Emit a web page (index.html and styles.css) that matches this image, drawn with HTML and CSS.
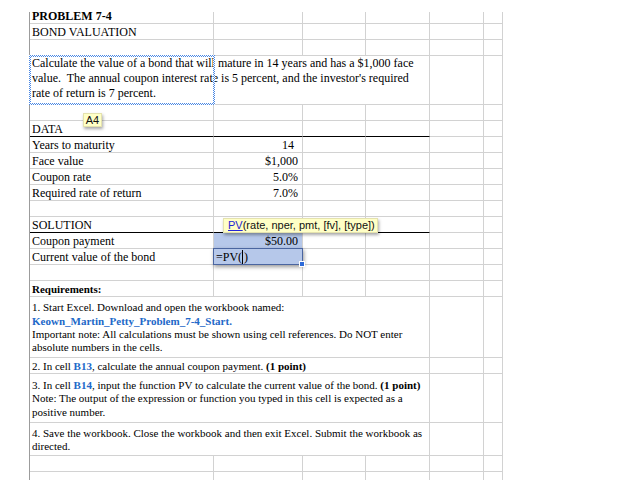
FILE: index.html
```html
<!DOCTYPE html>
<html>
<head>
<meta charset="utf-8">
<link rel="stylesheet" href="styles.css">
</head>
<body>
<div class="sheet">
  <!-- row 1 -->
  <div class="c bold">PROBLEM 7-4</div><div class="c"></div><div class="c"></div><div class="c"></div><div class="c"></div><div class="c"></div>
  <!-- row 2 -->
  <div class="c">BOND VALUATION</div><div class="c"></div><div class="c"></div><div class="c"></div><div class="c"></div><div class="c"></div>
  <!-- row 3 -->
  <div class="c"></div><div class="c"></div><div class="c"></div><div class="c"></div><div class="c"></div><div class="c"></div>
  <!-- row 4 -->
  <div class="c span4 intro">
    <div class="lines">Calculate the value of a bond that will mature in 14 years and has a $1,000 face<br>value.&nbsp; The annual coupon interest rate is 5 percent, and the investor's required<br>rate of return is 7 percent.</div>
    <div class="ants"><i class="at"></i><i class="ab"></i><i class="al"></i><i class="ar"></i></div>
  </div><div class="c"></div><div class="c"></div>
  <!-- row 5 -->
  <div class="c rel"><div class="tip tip-a4">A4</div></div><div class="c"></div><div class="c"></div><div class="c"></div><div class="c"></div><div class="c"></div>
  <!-- row 6 -->
  <div class="c blk">DATA</div><div class="c blk"></div><div class="c blk"></div><div class="c blk"></div><div class="c"></div><div class="c"></div>
  <!-- row 7 -->
  <div class="c">Years to maturity</div><div class="c num pad">14</div><div class="c"></div><div class="c"></div><div class="c"></div><div class="c"></div>
  <!-- row 8 -->
  <div class="c">Face value</div><div class="c num">$1,000</div><div class="c"></div><div class="c"></div><div class="c"></div><div class="c"></div>
  <!-- row 9 -->
  <div class="c">Coupon rate</div><div class="c num">5.0%</div><div class="c"></div><div class="c"></div><div class="c"></div><div class="c"></div>
  <!-- row 10 -->
  <div class="c">Required rate of return</div><div class="c num">7.0%</div><div class="c"></div><div class="c"></div><div class="c"></div><div class="c"></div>
  <!-- row 11 -->
  <div class="c"></div><div class="c"></div><div class="c"></div><div class="c"></div><div class="c"></div><div class="c"></div>
  <!-- row 12 -->
  <div class="c blk">SOLUTION</div><div class="c blk rel"><div class="tip tip-pv"><span class="fn">PV</span>(rate, nper, pmt, [fv], [type])</div></div><div class="c blk"></div><div class="c blk"></div><div class="c"></div><div class="c"></div>
  <!-- row 13 -->
  <div class="c">Coupon payment</div><div class="c num sel">$50.00</div><div class="c"></div><div class="c"></div><div class="c"></div><div class="c"></div>
  <!-- row 14 -->
  <div class="c">Current value of the bond</div><div class="c sel rel edit">=PV(<span class="caret"></span>)<div class="editbox"></div><div class="handle"></div></div><div class="c"></div><div class="c"></div><div class="c"></div><div class="c"></div>
  <!-- row 15 -->
  <div class="c"></div><div class="c"></div><div class="c"></div><div class="c"></div><div class="c"></div><div class="c"></div>
  <!-- row 16 -->
  <div class="c small bold">Requirements:</div><div class="c"></div><div class="c"></div><div class="c"></div><div class="c"></div><div class="c"></div>
  <!-- row 17 -->
  <div class="c span4 req"><div class="lines">1. Start Excel. Download and open the workbook named:<br><b class="blue">Keown_Martin_Petty_Problem_7-4_Start.</b><br>Important note: All calculations must be shown using cell references. Do NOT enter<br>absolute numbers in the cells.</div></div><div class="c"></div><div class="c"></div>
  <!-- row 18 -->
  <div class="c span4 req"><div class="lines">2. In cell <b class="blue">B13</b>, calculate the annual coupon payment. <b>(1 point)</b></div></div><div class="c"></div><div class="c"></div>
  <!-- row 19 -->
  <div class="c span4 req"><div class="lines">3. In cell <b class="blue">B14</b>, input the function PV to calculate the current value of the bond. <b>(1 point)</b><br>Note: The output of the expression or function you typed in this cell is expected as a<br>positive number.</div></div><div class="c"></div><div class="c"></div>
  <!-- row 20 -->
  <div class="c span4 req"><div class="lines">4. Save the workbook. Close the workbook and then exit Excel. Submit the workbook as<br>directed.</div></div><div class="c"></div><div class="c"></div>
  <!-- row 21 -->
  <div class="c"></div><div class="c"></div><div class="c"></div><div class="c"></div><div class="c"></div><div class="c"></div>
  <!-- row 22 -->
  <div class="c"></div><div class="c"></div><div class="c"></div><div class="c"></div><div class="c"></div><div class="c"></div>
</div>
</body>
</html>
```

FILE: styles.css
```css
html, body {
  margin: 0;
  padding: 0;
  background: #fff;
  overflow: hidden;
}

.sheet {
  display: grid;
  grid-template-columns: 184px 89px 63px 64px 54px 19px;
  grid-template-rows: 12px 16px 16px 49px repeat(12, 16px) 61px 16px 49px 33px 16px 16px;
  margin: 12px 0 0 29px;
  border-left: 1px solid #9c9c9c;
  width: max-content;
  font-family: "Liberation Serif", "Times New Roman", serif;
  font-size: 12px;
  color: #000;
}

.c {
  box-sizing: border-box;
  border-right: 1px solid #d2d2d2;
  border-bottom: 1px solid #d2d2d2;
  padding: 0 3px 0 2px;
  display: flex;
  align-items: flex-end;
  line-height: 13px;
  white-space: nowrap;
  min-width: 0;
}

.rel { position: relative; }

.bold { font-weight: bold; }

.blk { border-bottom-color: #000; }

.num {
  justify-content: flex-end;
  padding-right: 4px;
}

.num.pad { padding-right: 8px; }

.span4 { grid-column: span 4; }

.intro {
  position: relative;
  align-items: flex-start;
}

.intro .lines { line-height: 15px; margin-top: 0; }

.ants {
  position: absolute;
  left: -1px;
  top: -1px;
  width: 186px;
  height: 50px;
  pointer-events: none;
}

.ants i {
  position: absolute;
  background-color: #fff;
  background-image: repeating-conic-gradient(#4a88e4 0 25%, #ffffff 0 50%);
  background-size: 2px 2px;
}

.ants .at { left: 0; right: 0; top: 0; height: 2px; }
.ants .ab { left: 0; right: 0; bottom: 0; height: 2px; }
.ants .al { left: 0; top: 0; bottom: 0; width: 2px; }
.ants .ar { right: 0; top: 0; bottom: 0; width: 2px; }

.tip {
  position: absolute;
  z-index: 5;
  box-sizing: border-box;
  background: #ffffc6;
  border: 1px solid #e4e2ae;
  box-shadow: 1px 2px 3px rgba(0, 0, 0, 0.35);
  font-family: "Liberation Sans", Arial, sans-serif;
  font-size: 11px;
  line-height: 13px;
  color: #111;
  white-space: nowrap;
}

.tip-a4 {
  left: 53px;
  top: 8px;
  width: 19px;
  height: 14px;
  text-align: center;
}

.tip-pv {
  left: 9px;
  top: 1px;
  height: 15px;
  padding: 0 2px 0 4px;
}

.fn {
  color: #2424d4;
  text-decoration: underline;
}

.sel { background: #b6c8ea; }

.edit { overflow: visible; }

.caret {
  display: inline-block;
  width: 1px;
  height: 14px;
  background: #000;
  vertical-align: -3px;
  margin: 0 1px 0 0;
}

.editbox {
  position: absolute;
  left: -1px;
  top: -1px;
  right: -1px;
  bottom: -1px;
  border: 1px solid #4a65a0;
  box-shadow: 1px 2px 4px rgba(0, 0, 0, 0.4);
  pointer-events: none;
}

.handle {
  position: absolute;
  right: -3px;
  bottom: -3px;
  width: 4px;
  height: 4px;
  background: #2d6ad8;
  border: 1px solid #fff;
  z-index: 3;
}

.small {
  font-size: 11px;
}

.req {
  align-items: center;
  font-size: 11px;
  padding-top: 2px;
}

.req .lines { line-height: 13.3px; }

.blue { color: #2268c8; }
```
